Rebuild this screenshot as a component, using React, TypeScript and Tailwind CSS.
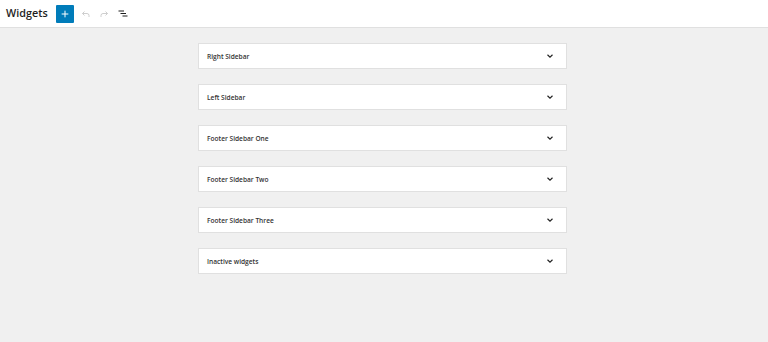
import React from "react";

const areas = [
  "Right Sidebar",
  "Left Sidebar",
  "Footer Sidebar One",
  "Footer Sidebar Two",
  "Footer Sidebar Three",
  "Inactive widgets",
];

function Chevron() {
  return (
    <svg width="10" height="10" viewBox="0 0 24 24" fill="none">
      <path d="M6 9l6 6 6-6" stroke="#1e1e1e" strokeWidth="2.6" />
    </svg>
  );
}

export default function App() {
  return (
    <div
      className="w-[768px] h-[342px] bg-[#f0f0f0] flex flex-col overflow-hidden"
      style={{ fontFamily: '"Open Sans", "Noto Sans", sans-serif' }}
    >
      <header className="h-[28px] bg-white border-b border-[#e0e0e0] flex items-center pl-[6px] shrink-0">
        <h1 className="text-[10.8px] font-semibold text-[#1e1e1e] leading-none w-[50px]">Widgets</h1>
        <button className="w-[18px] h-[18px] bg-[#007cba] flex items-center justify-center rounded-[1px]">
          <svg width="10" height="10" viewBox="0 0 24 24">
            <path d="M12 4v16M4 12h16" stroke="white" strokeWidth="2.4" />
          </svg>
        </button>
        <div className="ml-[6px] flex items-center">
          <svg width="12" height="12" viewBox="0 0 24 24" fill="none">
            <path d="M9 7L5 11l4 4M5 11h9a4 4 0 0 1 4 4v3" stroke="#c8c8c8" strokeWidth="1.8" />
          </svg>
          <svg className="ml-[6px]" width="12" height="12" viewBox="0 0 24 24" fill="none">
            <path d="M15 7l4 4-4 4M19 11h-9a4 4 0 0 0-4 4v3" stroke="#c8c8c8" strokeWidth="1.8" />
          </svg>
          <svg className="ml-[7px]" width="12" height="12" viewBox="0 0 24 24" fill="none">
            <path d="M3 6h11M7 11h11M11 16h10" stroke="#1e1e1e" strokeWidth="2" />
          </svg>
        </div>
      </header>
      <main className="flex-1 flex flex-col items-center pt-[15px] gap-[15px] pr-[3px]">
        {areas.map((a) => (
          <div
            key={a}
            className="w-[369px] h-[26px] bg-white border border-[#e0e0e0] flex items-center justify-between pl-[8px] pr-[11px]"
          >
            <span className="text-[6.6px] font-semibold text-[#333] leading-none pt-[2px]">{a}</span>
            <Chevron />
          </div>
        ))}
      </main>
    </div>
  );
}
